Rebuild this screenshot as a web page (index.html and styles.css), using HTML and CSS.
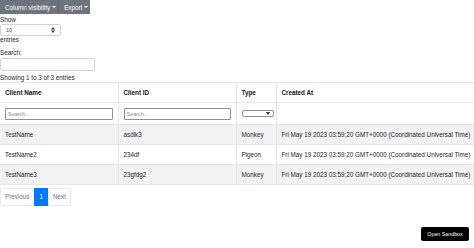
FILE: index.html
```html
<!DOCTYPE html>
<html lang="en">
<head>
    <meta charset="UTF-8">
    <meta name="viewport" content="width=device-width, initial-scale=1.0">
    <title>Clients</title>
    <link rel="stylesheet" href="styles.css">
</head>
<body>
    <div class="toolbar">
        <button class="tool-btn">Column visibility <span class="caret"></span></button>
        <button class="tool-btn">Export <span class="caret"></span></button>
    </div>

    <div class="length">
        <div>Show</div>
        <div class="select-wrap">
            <select class="length-select">
                <option>10</option>
            </select>
            <svg class="select-arrows" width="4" height="6" viewBox="0 0 4 6">
                <path d="M0 2.5 L2 0 L4 2.5 Z M0 3.5 L2 6 L4 3.5 Z" fill="#343a40"/>
            </svg>
        </div>
        <div>entries</div>
    </div>

    <div class="search">
        <div>Search:</div>
        <input type="search" class="search-input">
    </div>

    <div class="info">Showing 1 to 3 of 3 entries</div>

    <table class="clients">
        <colgroup>
            <col class="col-name">
            <col class="col-id">
            <col class="col-type">
            <col>
        </colgroup>
        <thead>
            <tr>
                <th>Client Name</th>
                <th>Client ID</th>
                <th>Type</th>
                <th>Created At</th>
            </tr>
            <tr class="filters">
                <td><input type="text" class="filter-input" placeholder="Search..."></td>
                <td><input type="text" class="filter-input" placeholder="Search..."></td>
                <td>
                    <div class="filter-select">
                        <svg width="4" height="3" viewBox="0 0 4 3">
                            <path d="M0 0 L4 0 L2 3 Z" fill="#333"/>
                        </svg>
                    </div>
                </td>
                <td></td>
            </tr>
        </thead>
        <tbody>
            <tr class="odd">
                <td>TestName</td>
                <td>asdlk3</td>
                <td>Monkey</td>
                <td>Fri May 19 2023 03:59:20 GMT+0000 (Coordinated Universal Time)</td>
            </tr>
            <tr>
                <td>TestName2</td>
                <td>234df</td>
                <td>Pigeon</td>
                <td>Fri May 19 2023 03:59:20 GMT+0000 (Coordinated Universal Time)</td>
            </tr>
            <tr class="odd">
                <td>TestName3</td>
                <td>23gfdg2</td>
                <td>Monkey</td>
                <td>Fri May 19 2023 03:59:20 GMT+0000 (Coordinated Universal Time)</td>
            </tr>
        </tbody>
    </table>

    <div class="pagination">
        <a class="page-link">Previous</a>
        <a class="page-link active">1</a>
        <a class="page-link">Next</a>
    </div>

    <button class="sandbox-btn">Open Sandbox</button>
</body>
</html>
```

FILE: styles.css
```css
body {
    font-family: "Liberation Sans", Arial, sans-serif;
    font-size: 6.3px;
    line-height: 8px;
    color: #212529;
    margin: 0;
    background-color: #fff;
}
.toolbar {
    display: flex;
    height: 14px;
}
.tool-btn {
    font-family: inherit;
    font-size: 6.3px;
    color: #fff;
    background-color: #6c757d;
    border: none;
    padding: 0 2px 0 5px;
    height: 14px;
    display: flex;
    align-items: center;
    gap: 2px;
}
.tool-btn + .tool-btn {
    border-left: 1px solid #5c636a;
}
.caret {
    display: inline-block;
    border-top: 2px solid #fff;
    border-left: 2px solid transparent;
    border-right: 2px solid transparent;
}
.length {
    margin-top: 2px;
}
.select-wrap {
    position: relative;
    width: 61px;
    height: 12px;
}
.length-select {
    display: block;
    appearance: none;
    width: 61px;
    height: 12px;
    font-family: inherit;
    font-size: 5.5px;
    color: #495057;
    border: 1px solid #ced4da;
    border-radius: 2px;
    background-color: #fff;
    padding: 0 5px;
    margin: 0;
}
.select-arrows {
    position: absolute;
    right: 6px;
    top: 3px;
}
.search {
    margin-top: 5px;
}
.search-input {
    display: block;
    width: 95px;
    height: 13px;
    box-sizing: border-box;
    border: 1px solid #ced4da;
    border-radius: 2px;
    margin: 1px 0 0;
    padding: 0;
}
.info {
    margin-top: 3px;
}
table.clients {
    width: 100%;
    table-layout: fixed;
    border-collapse: collapse;
    margin-top: 0;
}
.col-name,
.col-id {
    width: 118px;
}
.col-type {
    width: 40px;
}
.clients th,
.clients td {
    text-align: left;
    padding: 0 5px;
    height: 19px;
    border-top: 1px solid #e6e6e6;
    border-left: 1px solid #e6e6e6;
    white-space: nowrap;
    overflow: hidden;
}
.clients th:first-child,
.clients td:first-child {
    border-left: none;
}
.clients th {
    font-weight: bold;
    color: #111;
}
.filters td {
    height: 21px;
}
.filter-input {
    display: block;
    width: 100%;
    box-sizing: border-box;
    height: 12px;
    font-family: inherit;
    font-size: 5.5px;
    border: 1px solid #8f8f8f;
    border-radius: 1px;
    padding: 0 2px;
    margin: 0;
}
.filter-input::placeholder {
    color: #8a8a8a;
}
.filter-select {
    width: 32px;
    height: 7px;
    box-sizing: border-box;
    border: 1px solid #8f8f8f;
    border-radius: 2px;
    background-color: #fff;
    display: flex;
    align-items: center;
    justify-content: flex-end;
    padding-right: 3px;
}
.filter-select svg {
    display: block;
}
.clients tbody tr.odd td {
    background-color: #f2f2f2;
}
.clients tbody tr:last-child td {
    border-bottom: 1px solid #e6e6e6;
}
.pagination {
    display: flex;
    margin-top: 3px;
}
.page-link {
    display: block;
    height: 16px;
    line-height: 16px;
    padding: 0 4px;
    color: #6c757d;
    border: 1px solid #e9ecef;
    margin-left: -1px;
}
.page-link:first-child {
    margin-left: 0;
    border-radius: 2px 0 0 2px;
}
.page-link.active {
    padding: 0 5px;
    color: #fff;
    background-color: #007bff;
    border-color: #007bff;
}
.sandbox-btn {
    position: fixed;
    right: 5px;
    bottom: 7px;
    width: 48px;
    font-family: inherit;
    font-size: 5.3px;
    color: #fff;
    background-color: #000;
    border: none;
    border-radius: 2px;
    padding: 0;
    height: 14px;
}
```
